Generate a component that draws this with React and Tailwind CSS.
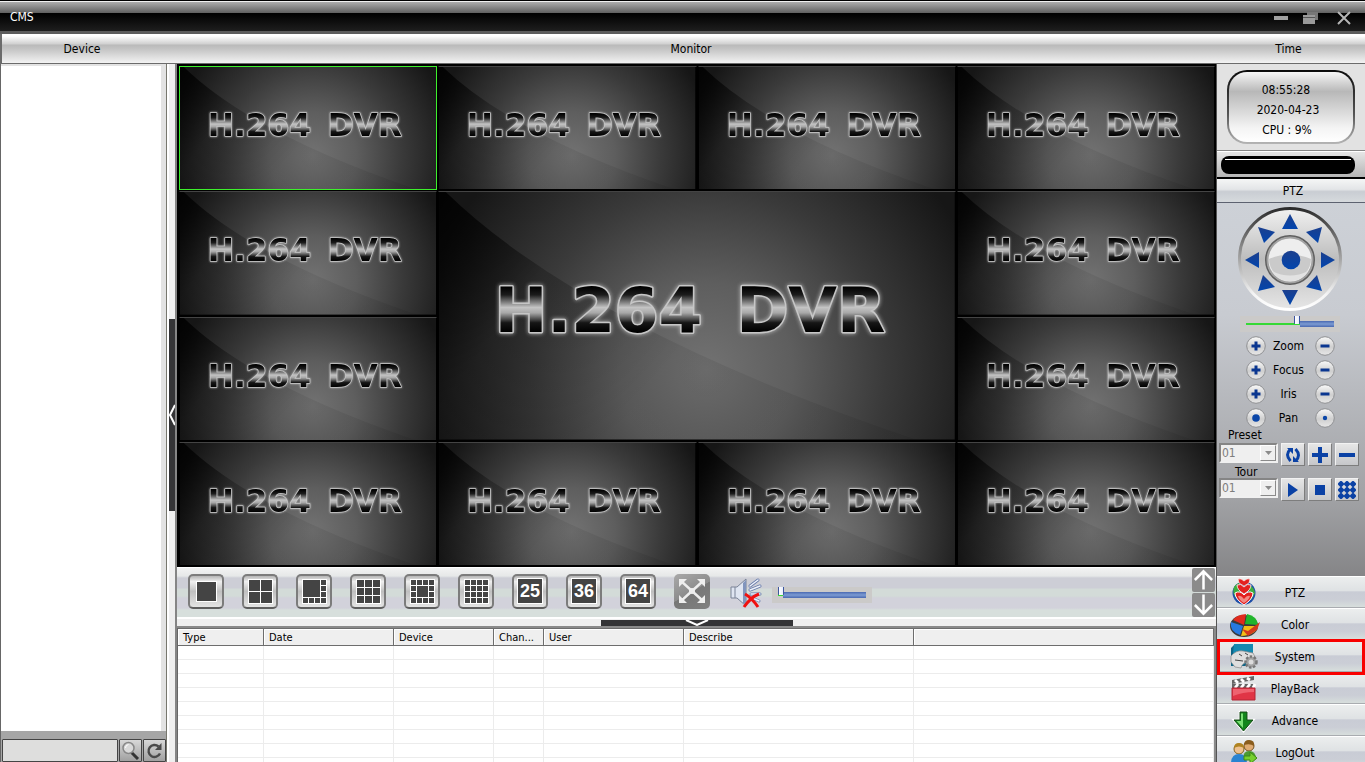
import React from "react";

const DARK = "#444444";

function TileDefs() {
  return (
    <svg className="absolute h-0 w-0" aria-hidden="true">
      <defs>
        <radialGradient id="tileGlow" gradientUnits="userSpaceOnUse" cx="268" cy="178" r="290">
          <stop offset="0" stopColor="#727272" />
          <stop offset=".3" stopColor="#5e5e5e" />
          <stop offset=".62" stopColor="#3a3a3a" />
          <stop offset="1" stopColor="#161616" />
        </radialGradient>
        <linearGradient id="tileShade" gradientUnits="userSpaceOnUse" x1="0" y1="0" x2="230" y2="170">
          <stop offset="0" stopColor="#000" stopOpacity=".9" />
          <stop offset=".45" stopColor="#000" stopOpacity=".25" />
          <stop offset="1" stopColor="#000" stopOpacity=".07" />
        </linearGradient>
        <linearGradient id="chrome" gradientUnits="userSpaceOnUse" x1="0" y1="95" x2="0" y2="140">
          <stop offset="0" stopColor="#000" />
          <stop offset=".18" stopColor="#1c1c1c" />
          <stop offset=".46" stopColor="#c4c4c4" />
          <stop offset=".58" stopColor="#a8a8a8" />
          <stop offset=".8" stopColor="#161616" />
          <stop offset="1" stopColor="#000" />
        </linearGradient>
      </defs>
    </svg>
  );
}

function Tile({ big, selected }) {
  return (
    <div
      className={
        (big ? "col-span-2 row-span-2 " : "") +
        "min-h-0 min-w-0 overflow-hidden border " +
        (selected ? "border-[#3df02c]" : "border-transparent border-t-[#444444]")
      }
    >
      <svg className="block h-full w-full" viewBox="0 0 517 248" preserveAspectRatio="xMidYMid slice">
        <rect width="517" height="248" fill="url(#tileGlow)" />
        <path d="M0 0H7Q147 136 478 248H0Z" fill="url(#tileShade)" />
        <g
          fill="url(#chrome)"
          stroke="#c6c6c6"
          strokeWidth="3"
          strokeLinejoin="round"
          fontFamily="DejaVu Sans, sans-serif"
          fontWeight="700"
          fontSize="63"
          style={{ paintOrder: "stroke", filter: "drop-shadow(0 0 2px #bbb)" }}
        >
          <text x="56" y="140">H.264</text>
          <text x="298" y="140">DVR</text>
        </g>
      </svg>
    </div>
  );
}

function Cells({ rects }) {
  return (
    <svg width="25" height="25" viewBox="0 0 25 25" shapeRendering="crispEdges">
      <rect width="25" height="25" fill="#fff" />
      {rects.map(([x, y, w, h], i) => (
        <rect key={i} x={x} y={y} width={w} height={h} fill={DARK} />
      ))}
    </svg>
  );
}

const grid = (xs, s) => xs.flatMap((y) => xs.map((x) => [x, y, s, s]));
const four = [1, 7, 13, 19];
const LAYOUTS = [
  { name: "1 view", pad: true },
  { name: "4 views", rects: grid([1, 13], 11) },
  { name: "8 views", rects: [[1, 1, 17, 17], ...four.map((y) => [19, y, 5, 5]), ...[1, 7, 13].map((x) => [x, 19, 5, 5])] },
  { name: "9 views", rects: grid([1, 9, 17], 7) },
  {
    name: "13 views",
    rects: [...four.map((x) => [x, 1, 5, 5]), ...four.map((x) => [x, 19, 5, 5]), [1, 7, 5, 5], [1, 13, 5, 5], [19, 7, 5, 5], [19, 13, 5, 5], [7, 7, 11, 11]],
  },
  { name: "16 views", rects: grid(four, 5) },
  { name: "25 views", text: "25" },
  { name: "36 views", text: "36" },
  { name: "64 views", text: "64" },
];

function LayoutButton({ item }) {
  return (
    <button
      aria-label={item.name}
      className="flex h-[35px] w-9 shrink-0 items-center justify-center rounded-[5px] border-2 border-[#7c7c7c] border-b-[#5e5e5e] bg-[linear-gradient(#b5b5b5,#efefef_18%,#c0c0c0_50%,#e4e4e4)]"
    >
      {item.pad && <span className="h-[21px] w-[21px] border border-white bg-[#444444]" />}
      {item.rects && <Cells rects={item.rects} />}
      {item.text && (
        <span className="flex h-[26px] w-[26px] items-center justify-center border border-white bg-[#444444] font-['Liberation_Sans',sans-serif] text-[18px] leading-none font-bold text-white">
          {item.text}
        </span>
      )}
    </button>
  );
}

const SLIDER =
  "h-4 w-[100px] appearance-none bg-[#cbcac9] bg-no-repeat px-[6px] outline-none [&::-webkit-slider-runnable-track]:h-full [&::-webkit-slider-thumb]:h-2 [&::-webkit-slider-thumb]:w-[6px] [&::-webkit-slider-thumb]:appearance-none [&::-webkit-slider-thumb]:rounded-b-[1px] [&::-webkit-slider-thumb]:bg-[linear-gradient(90deg,#3c55a0_1px,#fff_1px,#e8eefc_5px,#3c55a0_5px)] ";

function RoundButton({ label, kind }) {
  return (
    <button aria-label={label} className="h-5 w-5">
      <svg viewBox="0 0 20 20" width="20" height="20">
        <defs>
          <linearGradient id="knob" x1="0" y1="0" x2="0" y2="1">
            <stop offset="0" stopColor="#fafafa" />
            <stop offset=".55" stopColor="#cfcfcf" />
            <stop offset="1" stopColor="#e8e8e8" />
          </linearGradient>
        </defs>
        <circle cx="10" cy="10" r="9.3" fill="url(#knob)" stroke="#8f9093" />
        {kind === "plus" && <path d="M10 5.5v9M5.5 10h9" stroke="#0a3690" strokeWidth="3" />}
        {kind === "minus" && <path d="M5.5 10h9" stroke="#0a3690" strokeWidth="3" />}
        {kind === "big" && <circle cx="10" cy="10" r="3.8" fill="#0b46a8" />}
        {kind === "small" && <circle cx="10" cy="10" r="2.2" fill="#0b46a8" />}
      </svg>
    </button>
  );
}

function SquareButton({ label, children }) {
  return (
    <button
      aria-label={label}
      className="flex h-[23px] w-6 items-center justify-center border border-[#f2f2f2] border-r-[#7d7d7d] border-b-[#7d7d7d] bg-[linear-gradient(#e6e6e6,#c6c7ca)]"
    >
      <svg width="20" height="20" viewBox="0 0 20 20" fill="#0a41a5" stroke="#0a41a5">
        {children}
      </svg>
    </button>
  );
}

function NumberSelect({ id }) {
  return (
    <div className="relative h-5 w-[59px]">
      <select
        id={id}
        className="h-full w-full appearance-none rounded-none border-2 border-[#858585] border-r-[#f0f0f0] border-b-[#f0f0f0] bg-[#efefef] pl-px text-[12px] leading-none text-[#7d7d7d]"
      >
        <option>01</option>
      </select>
      <span className="pointer-events-none absolute top-[2px] right-[2px] flex h-4 w-4 items-center justify-center border border-white border-r-[#8a8a8a] border-b-[#8a8a8a] bg-[#efefef]">
        <svg width="7" height="4" viewBox="0 0 7 4">
          <path d="M0 0h7L3.5 4z" fill="#8b8b8b" />
        </svg>
      </span>
    </div>
  );
}

function Wheel() {
  return (
    <svg width="104" height="104" viewBox="0 0 104 104" role="img" aria-label="PTZ direction control">
      <defs>
        <linearGradient id="rim" x1="0" y1="0" x2="0" y2="1">
          <stop offset="0" stopColor="#2c2c2c" />
          <stop offset=".5" stopColor="#a5a5a5" />
          <stop offset=".85" stopColor="#f4f4f4" />
          <stop offset="1" stopColor="#fff" />
        </linearGradient>
        <linearGradient id="disc" x1="0" y1="0" x2="0" y2="1">
          <stop offset="0" stopColor="#f1f1f1" />
          <stop offset=".5" stopColor="#bdbdbd" />
          <stop offset="1" stopColor="#e6e6e6" />
        </linearGradient>
        <linearGradient id="arrow" x1="0" y1="0" x2="0" y2="1">
          <stop offset="0" stopColor="#1c3f8d" />
          <stop offset="1" stopColor="#0145ae" />
        </linearGradient>
      </defs>
      <circle cx="52" cy="52" r="50.5" fill="url(#disc)" stroke="url(#rim)" strokeWidth="3" />
      <circle cx="52" cy="53" r="24" fill="#e4e4e4" stroke="#606060" strokeWidth="2" />
      <circle cx="52" cy="53" r="22.5" fill="#eeeeee" stroke="#a2a2a2" strokeWidth="2" />
      <path d="M31 52Q52 43 73 52A21 21 0 0 1 31 52Z" fill="#cacaca" />
      <path d="M34 64A21 21 0 0 0 70 64Q52 73 34 64Z" fill="#e2e2e2" />
      <circle cx="53" cy="53" r="9.3" fill="url(#arrow)" />
      <g fill="url(#arrow)">
        <path d="M52 7L60 22H44Z" />
        <path d="M52 98L60 83H44Z" />
        <path d="M7 53L21 45V61Z" />
        <path d="M97 53L83 45V61Z" />
        <path d="M20 20L37 25L26 36Z" />
        <path d="M84 20L68 25L80 36Z" />
        <path d="M20 84L25 68L37 80Z" />
        <path d="M84 84L79 68L68 80Z" />
      </g>
    </svg>
  );
}

const MENU = [
  {
    label: "PTZ",
    icon: (
      <>
        <circle cx="13" cy="14" r="11.500" fill="#1e4fa8" />
        <path d="M3 8q3-4 6-4l-2 6 3 4-5 5q-4-5-2-11zM17 5q6 3 7 9l-4 7-2-6z" fill="#3fae3c" />
        <path d="M7 0q3-1 6 2q3-3 6-2l-1 4-5 3-5-3z" fill="#e3201f" stroke="#fff" strokeWidth=".6" />
        <path d="M6 6q4-2 7 2q3-4 7-2q0 5-7 9-7-4-7-9z" fill="#e3201f" stroke="#fff" strokeWidth=".8" />
        <path d="M4 14q5-3 9 2q4-5 9-2q0 6-9 12-9-6-9-12z" fill="#e3201f" stroke="#fff" />
        <path d="M7 17q3-1 6 3q3-4 6-3-1 4-6 7-5-3-6-7z" fill="#f28a84" />
      </>
    ),
  },
  {
    label: "Color",
    icon: (
      <>
        <ellipse cx="13" cy="15" rx="14" ry="11" fill="#3a3a3a" />
        <path d="M13 14L2 9Q5 4 15 3Z" fill="#e12a1c" />
        <path d="M14 13L16 3Q26 5 27 14Z" fill="#21b52b" />
        <path d="M12 15L0 11Q-2 20 9 24Z" fill="#2779df" />
        <path d="M13 15L27 15Q25 24 10 25Z" fill="#f3bd16" />
        <path d="M11 18L17 20L29 11L26 19L17 25Z" fill="#d33a1c" />
      </>
    ),
  },
  {
    label: "System",
    icon: (
      <>
        <path d="M0 5l4-4h18v22H0z" fill="#0c6587" />
        <path d="M3 1h19v9H2z" fill="#1489b0" />
        <path d="M0 13q5-6 12-5l10 2 3 6-6 3q-8 0-9 6l-6-1-4-5z" fill="#dedede" stroke="#888" strokeWidth=".7" />
        <circle cx="20" cy="19" r="5.500" fill="#a2a2a2" stroke="#777" strokeWidth="2.500" strokeDasharray="2.400 1.600" />
        <circle cx="20" cy="19" r="2.500" fill="#dcdcdc" />
        <path d="M8 11l3 2M14 10l3 2M4 17l8 1" stroke="#444" />
      </>
    ),
  },
  {
    label: "PlayBack",
    icon: (
      <>
        <path d="M1 5L23 1v4L1 9z" fill="#666" />
        <path d="M4 5l3 3M10 4l3 3M16 3l3 2" stroke="#fff" strokeWidth="2.800" />
        <path d="M1 9h23v4H1z" fill="#666" />
        <path d="M4 13l3-4M10 13l3-4M16 13l3-4M22 13l2-4" stroke="#fff" strokeWidth="2.800" />
        <path d="M1 13h23v12H1z" fill="#e03546" stroke="#b32634" />
        <path d="M2 14h21v3Q12 17 2 21z" fill="#ee6370" />
      </>
    ),
  },
  {
    label: "Advance",
    icon: (
      <>
        <path d="M9 5h7v8h6l-9.500 11L3 13h6z" fill="#12851b" stroke="#fff" strokeWidth="2.500" />
        <path d="M9 5h7v8h6l-9.500 11L3 13h6z" fill="#12851b" stroke="#174b19" />
        <path d="M5.500 14H10V6.500h2V21z" fill="#79df73" />
      </>
    ),
  },
  {
    label: "LogOut",
    icon: (
      <>
        <circle cx="18" cy="7" r="5" fill="#dfab72" stroke="#73501e" />
        <path d="M13 6q0-5 5-5 6 0 5 6-4-3-10-1z" fill="#8a5d1d" />
        <path d="M12 20q0-8 6-8 7 0 7 8z" fill="#4c9b34" />
        <circle cx="8" cy="10" r="5" fill="#eec190" stroke="#83601c" />
        <path d="M3 9q0-5 5-5t5 5q-5-3-10 0z" fill="#b08422" />
        <path d="M0 25q0-10 8-10t8 10z" fill="#2a83d1" />
        <path d="M13 17h6v-4l7 6-7 6v-4h-6z" fill="#76cf2e" stroke="#3d8914" />
      </>
    ),
  },
];

const COLUMNS = ["Type", "Date", "Device", "Chan...", "User", "Describe", ""];
const PTZ_ROWS = [
  ["Zoom", "plus", "minus"],
  ["Focus", "plus", "minus"],
  ["Iris", "plus", "minus"],
  ["Pan", "big", "small"],
];

export default function App() {
  return (
    <div className="flex h-screen flex-col overflow-hidden bg-[#efefef] font-['DejaVu_Sans_Condensed','DejaVu_Sans',sans-serif] text-[12px] leading-4 text-black">
      <TileDefs />
      <header className="flex h-[34px] shrink-0 items-center justify-between border-t border-b-3 border-t-black border-b-[#5c5c5c] bg-[linear-gradient(#f1f1f1_1px,#adadad_1px,#606060_12px,#000_12px,#1e1e1e)] pr-[14px] pl-[10px]">
        <h1 className="pt-[2px] text-white">CMS</h1>
        <div className="flex items-center gap-[14px] pt-1">
          <button aria-label="Minimize">
            <svg width="16" height="14" viewBox="0 0 16 14">
              <path d="M1 5h14v4H1z" fill="#a0a0a0" />
            </svg>
          </button>
          <button aria-label="Restore">
            <svg width="16" height="14" viewBox="0 0 16 14">
              <path d="M4 1h11v8h-3V4H4z" fill="#777" />
              <path d="M0 4h12v9H0z" fill="#9a9a9a" />
              <path d="M0 6.500h12" stroke="#555" />
            </svg>
          </button>
          <button aria-label="Close" className="ml-1">
            <svg width="14" height="14" viewBox="0 0 14 14">
              <path d="M1 1l12 12M13 1L1 13" stroke="#b5b5b5" strokeWidth="2" />
            </svg>
          </button>
        </div>
      </header>

      <div className="flex h-[30px] shrink-0 items-center border-b border-l-2 border-[#6b6b6b] bg-[linear-gradient(#fff_2px,#d0d0d0_10px,#bababa_11px,#c4c4c4_15px,#f3f3f3)] text-center">
        <div className="w-40">Device</div>
        <div className="flex-1 pl-1">Monitor</div>
        <div className="w-[149px] pr-1">Time</div>
      </div>

      <div className="flex min-h-0 flex-1">
        <aside className="flex w-[167px] shrink-0 flex-col border-r border-l border-r-[#77776e] border-l-[#666]">
          <div className="flex-1 border-t-2 border-r-[5px] border-[#e3e3e3] bg-white" />
          <div className="flex h-[31px] items-end gap-px bg-[#a6a6a6] pl-px">
            <input aria-label="Search device" className="h-[23px] min-w-0 flex-1 rounded-[1px] border border-[#444] bg-[#dededd] px-1 outline-none" />
            <button aria-label="Search" className="flex h-[23px] w-[23px] items-center justify-center rounded-[1px] border border-[#444] bg-[linear-gradient(#d8d8d8,#a0a0a0)]">
              <svg width="19" height="19" viewBox="0 0 19 19">
                <path d="M10 11l7 7" stroke="#333" strokeWidth="3" />
                <circle cx="7.500" cy="7" r="5.500" fill="#d9d9d9" stroke="#888" strokeWidth="1.500" />
                <path d="M4.500 7q0-3 3-3.500" stroke="#fff" fill="none" />
              </svg>
            </button>
            <button aria-label="Refresh" className="flex h-[23px] w-[23px] items-center justify-center rounded-[1px] border border-[#444] bg-[linear-gradient(#d8d8d8,#a0a0a0)]">
              <svg width="17" height="17" viewBox="0 0 17 17">
                <path d="M14 11.500A6 6 0 1 1 12.500 4.500" fill="none" stroke="#4a4a4a" strokeWidth="2.400" />
                <path d="M15.500 1v7H9z" fill="#4a4a4a" />
              </svg>
            </button>
          </div>
        </aside>

        <div className="flex w-[10px] shrink-0 items-center border-r-2 border-l-2 border-r-[#858585] border-l-white bg-[#efefef] pt-[3px]">
          <button aria-label="Collapse device list" className="flex h-48 w-[6px] items-center bg-[#343436]">
            <svg width="6" height="24" viewBox="0 0 6 24">
              <path d="M6 2L1 12L6 22" fill="none" stroke="#fff" strokeWidth="2" />
            </svg>
          </button>
        </div>

        <main className="flex min-w-0 flex-1 flex-col">
          <section aria-label="Monitor" className="grid min-h-0 flex-1 grid-cols-4 grid-rows-4 gap-px bg-black pt-[2px] pr-px pb-px pl-[2px]">
            <Tile selected />
            <Tile />
            <Tile />
            <Tile />
            <Tile />
            <Tile big />
            <Tile />
            <Tile />
            <Tile />
            <Tile />
            <Tile />
            <Tile />
            <Tile />
          </section>

          <div className="flex h-[50px] shrink-0 items-center justify-between border-t border-white bg-[linear-gradient(#f2f3f3,#e6e8e8_8px,#cdced6_10px,#cdced6_20px,#d3dbd8_21px,#d3dbd8_28px,#d2d2db_30px,#d2d2db_40px,#d7dfdc_42px,#d7dfdc)]">
            <div className="flex items-center pb-[3px] pl-[11px]">
              <div className="flex gap-[18px]">
                {LAYOUTS.map((l) => (
                  <LayoutButton key={l.name} item={l} />
                ))}
              </div>
              <button aria-label="Full screen" className="ml-[18px] flex h-[35px] w-9 items-center justify-center rounded-[5px] bg-[linear-gradient(150deg,#a9a9a9,#8c8c8c_50%,#777_51%,#808080)]">
                <svg width="30" height="28" viewBox="0 0 30 28">
                  <path d="M4 4L26 24M26 4L4 24" stroke="#eee" strokeWidth="2.400" />
                  <path d="M2 2h8L2 10zM28 2v8l-8-8zM2 26v-8l8 8zM28 26h-8l8-8z" fill="#eee" />
                  <circle cx="15" cy="14" r="3" fill="#eee" />
                </svg>
              </button>
              <button aria-label="Mute" className="ml-5 pt-1">
                <svg width="32" height="32" viewBox="0 0 32 32">
                  <path d="M1 10h6L16 2v27L7 21H1z" fill="#dfe5f1" stroke="#7a8397" />
                  <path d="M5 10v11" stroke="#7a8397" />
                  <path d="M13 6v20l3 2V3z" fill="#8195bd" />
                  <path d="M20 9L28 3M20 13L30 9M21 17h9M20 20l9 4" stroke="#667aa9" strokeWidth="3" strokeLinecap="round" />
                  <path d="M20 9L28 3M20 13L30 9M21 17h9M20 20l9 4" stroke="#eef2fb" strokeWidth="1.500" strokeLinecap="round" />
                  <path d="M15 17q7 4 13 13M29 17Q21 20 14 30" stroke="#f01010" strokeWidth="3" fill="none" />
                </svg>
              </button>
              <input
                type="range"
                aria-label="Volume"
                defaultValue="0"
                className={SLIDER + "mt-[7px] ml-[10px] bg-[linear-gradient(#35d935,#35d935),linear-gradient(#4a69b2,#7c9bd2,#4a69b2)] [background-position:6px_7px,11px_5px] [background-size:5px_2px,83px_6px]"}
              />
            </div>
            <div className="flex flex-col gap-px pr-px">
              {["M12 22V4M3 12L12 3L21 12", "M12 1V20M3 12L12 21L21 12"].map((d, i) => (
                <button key={d} aria-label={i ? "Next page" : "Previous page"} className="h-6 w-[23px] rounded-[2px] bg-[#8b8b8b]">
                  <svg width="23" height="24" viewBox="0 0 24 24">
                    <path d={d} fill="none" stroke="#fff" strokeWidth="2.600" />
                  </svg>
                </button>
              ))}
            </div>
          </div>

          <div className="flex h-[11px] shrink-0 items-center justify-center border-t-2 border-b-2 border-t-white border-b-[#8a8a8a] bg-[#efefef]">
            <button aria-label="Collapse log" className="flex h-[6px] w-48 justify-center bg-[#343436]">
              <svg width="24" height="6" viewBox="0 0 24 6">
                <path d="M1 0L12 5L23 0" fill="none" stroke="#fff" strokeWidth="2" />
              </svg>
            </button>
          </div>

          <div className="h-[134px] shrink-0 overflow-hidden border-r-2 border-l border-r-[#8a8a8a] border-l-[#666] bg-white">
            <table className="w-full table-fixed border-separate border-spacing-0 text-[11px]">
              <colgroup>
                <col className="w-[86px]" />
                <col className="w-[130px]" />
                <col className="w-[100px]" />
                <col className="w-[50px]" />
                <col className="w-[140px]" />
                <col className="w-[230px]" />
                <col />
              </colgroup>
              <thead>
                <tr className="h-[18px]">
                  {COLUMNS.map((c, i) => (
                    <th key={i} scope="col" className="border-t border-r border-b border-[#6d6d6d] bg-[#efefef] p-0 pt-px pl-[5px] text-left leading-[15px] font-normal shadow-[inset_1px_1px_#fff]">
                      {c}
                    </th>
                  ))}
                </tr>
              </thead>
              <tbody>
                {Array.from({ length: 9 }, (_, r) => (
                  <tr key={r} className="h-[14px]">
                    {COLUMNS.map((c, i) => (
                      <td key={i} className="border-r border-b border-[#ececec] p-0" />
                    ))}
                  </tr>
                ))}
              </tbody>
            </table>
          </div>
        </main>

        <aside className="flex w-[149px] shrink-0 flex-col overflow-hidden border-l border-[#555]">
          <div className="flex h-[87px] shrink-0 justify-center border-b border-[#888] bg-[#e2e2e2] pt-[6px]">
            <div className="h-[74px] w-32 rounded-[20px] bg-[linear-gradient(#0a0a0a,#555_60%,#b5b5b5)] p-[2px]">
              <div className="flex h-full flex-col rounded-[18px] bg-[linear-gradient(#f6f6f6,#b8b8b8_28%,#c6c6c6_40%,#f4f4f4_80%,#fff)] pt-2 text-center leading-5">
                <span className="pr-[10px]">08:55:28</span>
                <span className="pr-[6px]">2020-04-23</span>
                <span className="pr-2">CPU : 9%</span>
              </div>
            </div>
          </div>
          <div className="flex h-7 shrink-0 items-center border-t border-b-2 border-t-white border-b-black bg-[linear-gradient(#e6e6e6,#b5b5b5)] pr-[10px] pl-1">
            <div className="h-[18px] flex-1 rounded-[8px] bg-black px-1 pt-[3px]">
              <div className="h-px bg-white" />
            </div>
          </div>
          <h2 className="flex h-6 shrink-0 items-center justify-center border-b border-[#5d6270] bg-[linear-gradient(#f5f6f6,#e3e5e7_45%,#c9cdd3_55%,#d6dadd)] pt-px pl-1">
            PTZ
          </h2>

          <div className="min-h-[373px] flex-1 bg-[linear-gradient(#cdd1d7,#c8cbd1_30%,#a0a1a4_80%,#858587)]">
            <div className="flex flex-col items-center pt-1 pr-[2px]">
              <Wheel />
              <input
                type="range"
                aria-label="PTZ speed"
                defaultValue="59"
                className={SLIDER + "mt-[5px] bg-[linear-gradient(#35d935,#35d935),linear-gradient(#4a69b2,#7c9bd2,#4a69b2)] [background-position:6px_7px,60px_5px] [background-size:54px_2px,34px_6px]"}
              />
            </div>
            <div className="mt-1 flex flex-col gap-1 pr-[30px] pl-[29px]">
              {PTZ_ROWS.map(([name, a, b]) => (
                <div key={name} className="flex items-center justify-between">
                  <RoundButton label={name + " first"} kind={a} />
                  <span className="pr-1">{name}</span>
                  <RoundButton label={name + " second"} kind={b} />
                </div>
              ))}
            </div>
            <label htmlFor="preset" className="block pl-[11px] leading-[15px]">
              Preset
            </label>
            <div className="flex gap-[3px] pl-[2px]">
              <NumberSelect id="preset" />
              <SquareButton label="Call preset">
                <path d="M7.500 16Q1.500 9.500 7.500 4M12.500 4Q18.500 10.500 12.500 16" fill="none" strokeWidth="3" />
                <path d="M4 3h6v6zM16 17h-6v-6z" stroke="none" />
              </SquareButton>
              <SquareButton label="Add preset">
                <path d="M10 2v16M2 10h16" strokeWidth="4" />
              </SquareButton>
              <SquareButton label="Delete preset">
                <path d="M2 10h16" strokeWidth="4" />
              </SquareButton>
            </div>
            <label htmlFor="tour" className="block pl-[18px] leading-[12px]">
              Tour
            </label>
            <div className="flex gap-[3px] pl-[2px]">
              <NumberSelect id="tour" />
              <SquareButton label="Start tour">
                <path d="M5 3l10 7-10 7z" stroke="none" />
              </SquareButton>
              <SquareButton label="Stop tour">
                <path d="M5 5h10v10H5z" stroke="none" />
              </SquareButton>
              <SquareButton label="Edit tour">
                <path d="M4 1v18M10 1v18M16 1v18M1 4h18M1 10h18M1 16h18" strokeWidth="1.500" />
                {[4, 10, 16].flatMap((y) => [4, 10, 16].map((x) => <circle key={x + "-" + y} cx={x} cy={y} r="2.300" />))}
              </SquareButton>
            </div>
          </div>

          <nav className="shrink-0">
            {MENU.map((m) => (
              <button
                key={m.label}
                className="relative flex h-8 w-full items-center border-t border-b border-t-white border-b-[#a9acb0] bg-[linear-gradient(#eceeee,#dfe2e4_45%,#c9ccd5_50%,#cbced6_75%,#d7dedc)] pl-[14px]"
              >
                <svg width="26" height="27" viewBox="0 0 26 27" overflow="visible" className="shrink-0">
                  {m.icon}
                </svg>
                <span className="flex-1 pt-px pr-[32px] text-center">{m.label}</span>
                {m.label === "System" && <span className="absolute -top-[2px] right-0 -bottom-1 left-0 z-10 border-3 border-[#f80000]" />}
              </button>
            ))}
          </nav>
        </aside>
      </div>
    </div>
  );
}
